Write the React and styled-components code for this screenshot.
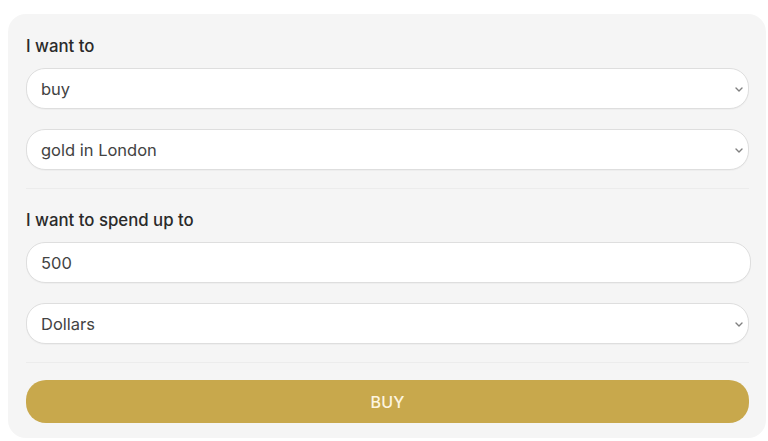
import React from "react";
import styled, { createGlobalStyle } from "styled-components";

const Global = createGlobalStyle`
  html, body { margin: 0; padding: 0; background: #ffffff; }
  body { font-family: Inter, "Liberation Sans", Arial, sans-serif; }
  * { box-sizing: border-box; }
`;

const Card = styled.form`
  margin: 14px 2px 3px 8px;
  padding: 21px 17px 15px 18px;
  background: #f5f5f5;
  border-radius: 18px;
  display: flex;
  flex-direction: column;
`;

const Label = styled.div`
  font-size: 16.8px;
  line-height: 22px;
  font-weight: 500;
  color: #2a2a2a;
  margin-bottom: 11px;
`;

const Stack = styled.div`
  display: flex;
  flex-direction: column;
  gap: 20px;
`;

const Divider = styled.hr`
  border: none;
  height: 1px;
  background: #ececec;
  margin: ${(p) => p.$m};
`;

const SelectWrap = styled.div`
  position: relative;
  display: flex;
`;

const fieldCss = `
  width: 100%;
  height: 41px;
  border: 1px solid #dedede;
  border-radius: 19px;
  background: #ffffff;
  padding: 0 14px;
  font-family: Inter, "Liberation Sans", Arial, sans-serif;
  font-size: 16.5px;
  color: #434343;
  outline: none;
  box-shadow: 0 1px 1px rgba(0,0,0,0.03);
`;

const Select = styled.select`
  ${fieldCss}
  appearance: none;
  -webkit-appearance: none;
`;

const Input = styled.input`
  ${fieldCss}
  width: calc(100% + 2px);
`;

const Chevron = styled.svg`
  position: absolute;
  right: 6px;
  top: 50%;
  margin-top: -2px;
  width: 8px;
  height: 5px;
  pointer-events: none;
`;

const Button = styled.button`
  height: 43px;
  border: none;
  border-radius: 20px;
  background: #c8a84c;
  color: #fdf5e0;
  font-family: Inter, "Liberation Sans", Arial, sans-serif;
  font-size: 16px;
  font-weight: 500;
  letter-spacing: 0.2px;
  cursor: pointer;
`;

function SelectField({ value, options }) {
  return (
    <SelectWrap>
      <Select defaultValue={value}>
        {options.map((o) => (
          <option key={o} value={o}>{o}</option>
        ))}
      </Select>
      <Chevron viewBox="0 0 8 5">
        <path d="M1 1l3 3 3-3" fill="none" stroke="#808080" strokeWidth="1.4" strokeLinecap="round" strokeLinejoin="round" />
      </Chevron>
    </SelectWrap>
  );
}

export default function App() {
  return (
    <>
      <Global />
      <Card onSubmit={(e) => e.preventDefault()}>
        <Label>I want to</Label>
        <Stack>
          <SelectField value="buy" options={["buy", "sell"]} />
          <SelectField value="gold in London" options={["gold in London", "silver in London"]} />
        </Stack>
        <Divider $m="18px 0 20px" />
        <Label>I want to spend up to</Label>
        <Stack>
          <Input defaultValue="500" />
          <SelectField value="Dollars" options={["Dollars", "Euros", "Pounds"]} />
        </Stack>
        <Divider $m="18px 0 17px" />
        <Button type="submit">BUY</Button>
      </Card>
    </>
  );
}
